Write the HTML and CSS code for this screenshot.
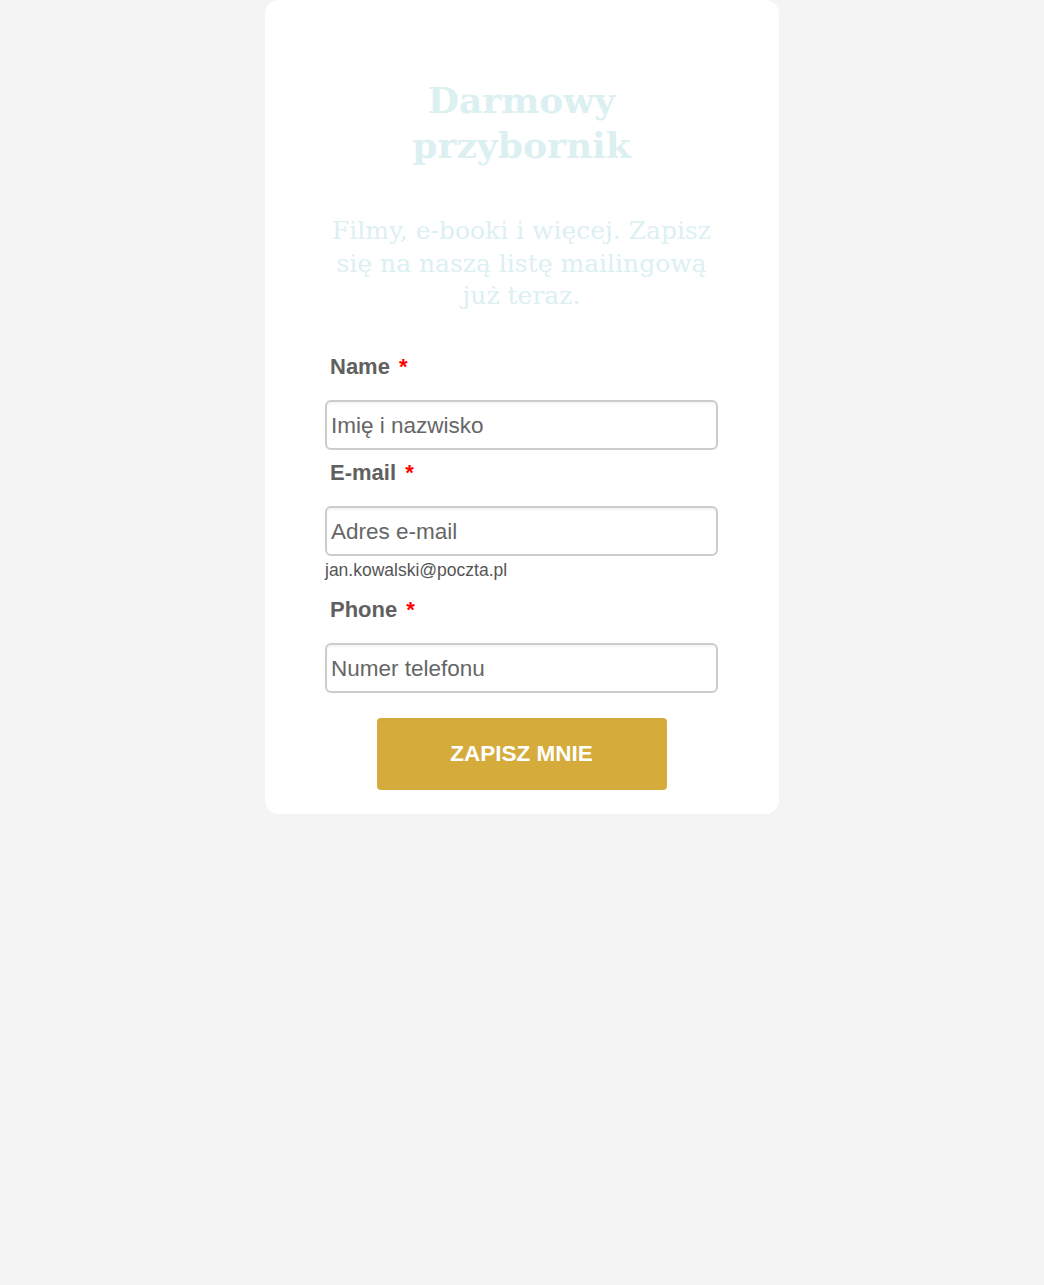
FILE: index.html
```html
<!DOCTYPE html>
<html lang="pl">
  <head>
    <meta charset="UTF-8" />
    <meta name="viewport" content="width=device-width, initial-scale=1.0" />
    <title>Darmowy przybornik</title>
    <link rel="stylesheet" href="styles.css">
  </head>
  <body>
    <div class="card">
      <h1 class="title">Darmowy<br>przybornik</h1>
      <p class="subtitle">Filmy, e-booki i więcej. Zapisz się na naszą listę mailingową już teraz.</p>

      <form class="signup">
        <label class="field-label" for="name">Name <span class="req">*</span></label>
        <input class="field-input" id="name" type="text" placeholder="Imię i nazwisko" />

        <label class="field-label" for="email">E-mail <span class="req">*</span></label>
        <input class="field-input" id="email" type="email" placeholder="Adres e-mail" />
        <div class="field-hint">jan.kowalski@poczta.pl</div>

        <label class="field-label" for="phone">Phone <span class="req">*</span></label>
        <input class="field-input" id="phone" type="tel" placeholder="Numer telefonu" />

        <div class="actions">
          <button class="submit" type="button">ZAPISZ MNIE</button>
        </div>
      </form>
    </div>
  </body>
</html>
```

FILE: styles.css
```css
* {
  margin: 0;
  padding: 0;
  box-sizing: border-box;
}

body {
  background: #f4f4f4;
  font-family: "Liberation Sans", Arial, sans-serif;
}

/* White card in the middle */
.card {
  width: 514px;
  margin: 0 auto;
  background: #ffffff;
  border-radius: 14px;
  padding: 78px 61px 24px 60px;
}

.title {
  font-family: Georgia, "DejaVu Serif", serif;
  font-size: 36px;
  line-height: 45px;
  font-weight: bold;
  color: #dcf0f2;
  text-align: center;
}

.subtitle {
  font-family: Georgia, "DejaVu Serif", serif;
  font-size: 25px;
  line-height: 32.5px;
  color: #dcf0f2;
  text-align: center;
  margin: 47px 0 0;
}

.signup {
  display: flex;
  flex-direction: column;
  margin-top: 31px;
}

.field-label {
  display: block;
  padding: 11px 0 0 5px;
  margin-bottom: 21px;
  font-size: 22px;
  line-height: 24px;
  font-weight: bold;
  color: #606060;
}

.req {
  color: #ff0000;
  margin-left: 3px;
}

.field-input {
  width: 100%;
  height: 50px;
  border: 2px solid #cccccc;
  border-radius: 6px;
  padding: 2px 4px 0;
  font-family: "Liberation Sans", Arial, sans-serif;
  font-size: 22.5px;
  color: #444;
  background: #fff;
  box-shadow: inset 0 2px 2px rgba(0, 0, 0, 0.04);
}

.field-input::placeholder {
  color: #666666;
}

.field-hint {
  margin: 4px 0 7px;
  font-size: 17.5px;
  line-height: 20px;
  color: #555555;
}

.actions {
  display: flex;
  justify-content: center;
  margin-top: 25px;
}

.submit {
  width: 290px;
  height: 72px;
  background: #d5ab3c;
  border: none;
  border-radius: 4px;
  color: #ffffff;
  font-family: "Liberation Sans", Arial, sans-serif;
  font-size: 22.5px;
  font-weight: bold;
}
```
